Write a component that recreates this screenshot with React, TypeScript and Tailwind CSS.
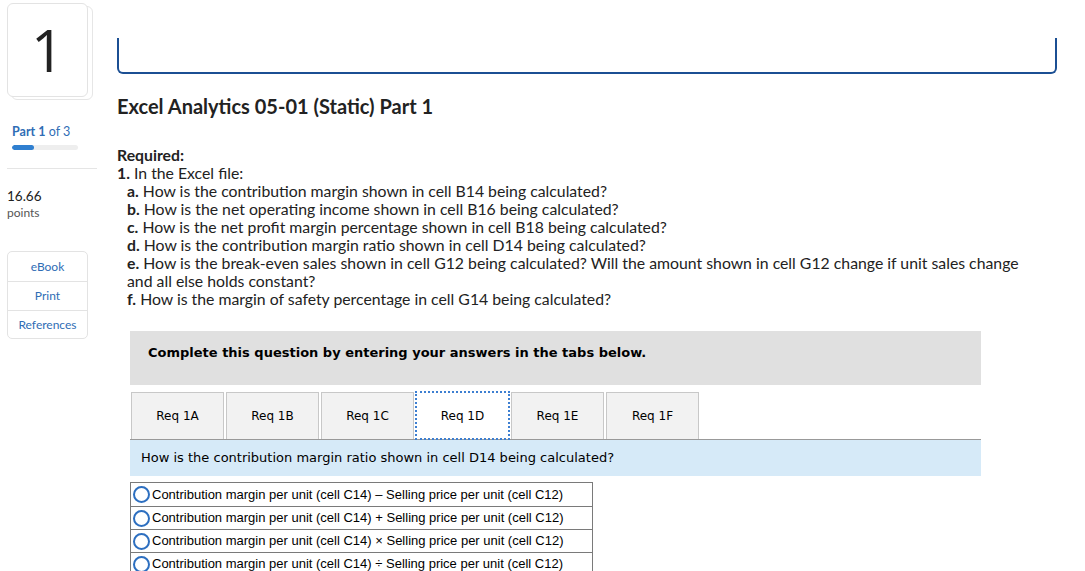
import React from "react";

const sans = { fontFamily: "Lato, 'Open Sans', Arial, sans-serif" };

const tabs = ["Req 1A", "Req 1B", "Req 1C", "Req 1D", "Req 1E", "Req 1F"];
const options = [
  "Contribution margin per unit (cell C14) – Selling price per unit (cell C12)",
  "Contribution margin per unit (cell C14) + Selling price per unit (cell C12)",
  "Contribution margin per unit (cell C14) × Selling price per unit (cell C12)",
  "Contribution margin per unit (cell C14) ÷ Selling price per unit (cell C12)",
];

export default function App() {
  return (
    <div className="w-[1085px] h-[571px] overflow-hidden bg-white flex items-start text-[#222]" style={sans}>
      {/* Sidebar */}
      <div className="w-[97px] shrink-0 pl-[7px] pt-[3px] flex flex-col">
        <div className="relative w-[81px] h-[94px] shrink-0">
          <div className="absolute left-[4px] top-[3px] w-[82px] h-[94px] rounded-[6px] border border-[#e6e6e6] bg-white" />
          <div className="absolute inset-0 rounded-[6px] border border-[#e3e3e3] bg-white flex items-center justify-center">
            <span className="text-[58px] leading-none text-[#222] font-['Open_Sans'] font-medium">1</span>
          </div>
        </div>
        <div className="pl-[5px] mt-[28px] text-[12.5px] leading-[14px] text-[#2f6db5]">
          <span className="font-bold">Part 1</span> of 3
        </div>
        <div className="ml-[5px] mt-[6px] w-[66px] h-[5px] rounded-full bg-[#eeeeee] overflow-hidden">
          <div className="w-[22px] h-full rounded-full bg-[#2f7fd0]" />
        </div>
        <div className="mt-[18px] w-[90px] border-t border-[#e5e5e5]" />
        <div className="mt-[20px] text-[13.5px] leading-[15px] text-[#222]">16.66</div>
        <div className="text-[12px] leading-[17px] text-[#555]">points</div>
        <div className="mt-[30px] w-[81px] rounded-[5px] border border-[#e3e3e3] flex flex-col text-[12px] text-[#2f6db5]">
          <div className="h-[29px] flex items-center justify-center">eBook</div>
          <div className="h-[29px] flex items-center justify-center border-t border-[#e3e3e3]">Print</div>
          <div className="h-[28px] flex items-center justify-center border-t border-[#e3e3e3]">References</div>
        </div>
      </div>

      {/* Main */}
      <div className="pl-[20px] block">
        <div className="mt-[38px] w-[940px] h-[36px] border-x-2 border-b-2 border-[#1b4f93] rounded-b-[6px]" />
        <h1 className="mt-[20px] text-[20px] leading-[24px] font-bold text-[#222]">
          Excel Analytics 05-01 (Static) Part 1
        </h1>
        <div className="mt-[28px] text-[15.8px] leading-[18px] text-[#222]">
          <div className="font-bold">Required:</div>
          <div><span className="font-bold">1.</span> In the Excel file:</div>
          <div className="pl-[10px] w-[930px]">
            <div><span className="font-bold">a.</span> How is the contribution margin shown in cell B14 being calculated?</div>
            <div><span className="font-bold">b.</span> How is the net operating income shown in cell B16 being calculated?</div>
            <div><span className="font-bold">c.</span> How is the net profit margin percentage shown in cell B18 being calculated?</div>
            <div><span className="font-bold">d.</span> How is the contribution margin ratio shown in cell D14 being calculated?</div>
            <div><span className="font-bold">e.</span> How is the break-even sales shown in cell G12 being calculated? Will the amount shown in cell G12 change if unit sales change and all else holds constant?</div>
            <div><span className="font-bold">f.</span> How is the margin of safety percentage in cell G14 being calculated?</div>
          </div>
        </div>

        <div className="ml-[13px] mt-[23px] w-[851px]" style={{ fontFamily: "'DejaVu Sans', Verdana, sans-serif" }}>
          <div className="h-[54px] bg-[#e0e0e0] pt-[14px] pl-[18px] text-[13px] leading-[16px] font-bold text-black">
            Complete this question by entering your answers in the tabs below.
          </div>
          <div className="mt-[7px] flex pl-[1px] border-b border-[#999]">
            {tabs.map((t) => {
              const active = t === "Req 1D";
              return (
                <div
                  key={t}
                  className={
                    active
                      ? "w-[93px] h-[47px] mr-[2px] bg-white flex items-center justify-center text-[12px] text-black outline-2 outline-dotted outline-[#3d7fd1] -outline-offset-1 relative z-10 -mb-[2px]"
                      : "w-[93px] h-[47px] mr-[2px] bg-[#f2f2f2] border border-b-0 border-[#c8c8c8] flex items-center justify-center text-[12px] text-black"
                  }
                >
                  {t}
                </div>
              );
            })}
          </div>
          <div className="h-[36px] bg-[#d6eaf8] flex items-center pl-[11px] text-[13px] text-black">
            How is the contribution margin ratio shown in cell D14 being calculated?
          </div>
          <div className="mt-[6px] w-[463px] border border-[#7a7a7a]" style={{ fontFamily: "'Liberation Sans', Arial, sans-serif" }}>
            {options.map((o, i) => (
              <div key={i} className={"h-[23px] flex items-center pl-[2px] text-[13px] text-black " + (i > 0 ? "border-t border-[#7a7a7a]" : "")}>
                <span className="inline-block w-[17px] h-[17px] rounded-full border-2 border-[#2d6fc0] mr-[2px] shrink-0" />
                {o}
              </div>
            ))}
          </div>
        </div>
      </div>
    </div>
  );
}
